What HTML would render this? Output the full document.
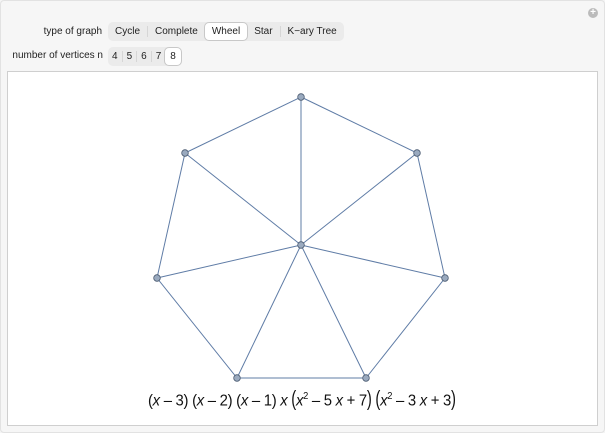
<!DOCTYPE html>
<html><head><style>
body{margin:0;width:605px;height:433px;background:#f5f5f5;font-family:"Liberation Sans",sans-serif;position:relative;overflow:hidden}
.outer{position:absolute;left:0;top:0;width:603px;height:431px;border:1px solid #e2e2e2;border-radius:4px;background:#f6f6f6}
.lbl{position:absolute;font-size:10px;color:#222;text-align:right}
.bar{position:absolute;display:flex;background:#ebebeb;border-radius:5px;height:19px;align-items:center;font-size:10px;color:#222}
.bar span{padding:0 7px;border-left:1px solid #d6d6d6;line-height:11px}
.bar span:first-child{border-left:none}
.bar span.sel{background:#fff;border:1px solid #c8c8c8;border-radius:5px;line-height:17px;margin:0 -1px}
.bar span.sel+span{border-left:none}
.box{position:absolute;left:7px;top:71px;width:589px;height:353px;background:#fff;border:1px solid #cfcfcf}
.math{position:absolute;left:148px;top:391px;font-size:16px;color:#111;font-family:"Liberation Sans",sans-serif;white-space:nowrap;letter-spacing:-0.3px;transform:scaleX(0.93);transform-origin:0 0}
.math i{font-style:italic}
.math .p{display:inline-block;transform:scaleY(1.3);transform-origin:50% 60%}
.plus{position:absolute;left:588px;top:8px;width:10px;height:10px;border-radius:50%;background:#bbb;color:#fff;font-size:10px;line-height:10px;text-align:center;font-weight:bold}
</style></head><body>
<div class="outer"></div>
<div class="plus">+</div>
<div class="lbl" style="left:0;width:102px;top:26px">type of graph</div>
<div class="bar" style="left:108px;top:22px"><span>Cycle</span><span>Complete</span><span class="sel">Wheel</span><span>Star</span><span>K−ary Tree</span></div>
<div class="lbl" style="left:0;width:103px;top:50px">number of vertices n</div>
<div class="bar" style="left:108px;top:47px"><span style="padding:0 4px">4</span><span style="padding:0 4px">5</span><span style="padding:0 4px">6</span><span style="padding:0 4px">7</span><span class="sel" style="padding:0 5px">8</span></div>
<div class="box"></div>
<svg style="position:absolute;left:0;top:0" width="605" height="433">
<g stroke="#5f7ca6" stroke-width="1" fill="none">
<polygon points="301,97 417,153 445,278 366,378 237,378 157,278 185,153"/>
<path d="M301,245L301,97M301,245L417,153M301,245L445,278M301,245L366,378M301,245L237,378M301,245L157,278M301,245L185,153"/>
</g>
<g fill="#9aaabf" stroke="#4a5a70" stroke-width="0.8">
<circle cx="301" cy="97" r="3.3"/><circle cx="417" cy="153" r="3.3"/><circle cx="445" cy="278" r="3.3"/><circle cx="366" cy="378" r="3.3"/><circle cx="237" cy="378" r="3.3"/><circle cx="157" cy="278" r="3.3"/><circle cx="185" cy="153" r="3.3"/><circle cx="301" cy="245" r="3.3"/>
</g>
</svg>
<div class="math">(<i>x</i> – 3) (<i>x</i> – 2) (<i>x</i> – 1) <i>x</i> <span class="p">(</span><i>x</i><sup style="font-size:10px">2</sup> – 5 <i>x</i> + 7<span class="p">)</span> <span class="p">(</span><i>x</i><sup style="font-size:10px">2</sup> – 3 <i>x</i> + 3<span class="p">)</span></div>
</body></html>
